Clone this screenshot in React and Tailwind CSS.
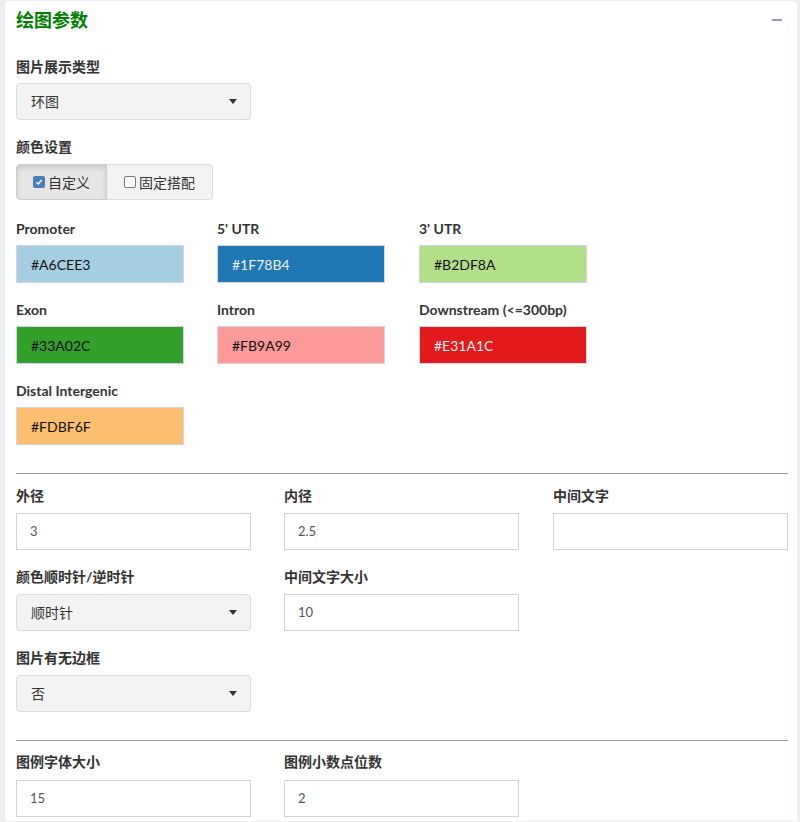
import React, { useState } from "react";

const colorItems = [
  { label: "Promoter", hex: "#A6CEE3", dark: false },
  { label: "5' UTR", hex: "#1F78B4", dark: true },
  { label: "3' UTR", hex: "#B2DF8A", dark: false },
  { label: "Exon", hex: "#33A02C", dark: false },
  { label: "Intron", hex: "#FB9A99", dark: false },
  { label: "Downstream (<=300bp)", hex: "#E31A1C", dark: true },
  { label: "Distal Intergenic", hex: "#FDBF6F", dark: false },
];

const Label = ({ children, className = "" }) => (
  <div className={`h-5 text-[14px] leading-5 font-bold text-[#333] ${className}`}>{children}</div>
);

const Select = ({ value }) => (
  <div className="h-[37px] w-[235px] flex items-center justify-between pl-[14px] pr-[13px] bg-[#f3f3f3] border border-[#dcdcdc] rounded text-[14px] text-[#333]">
    <span>{value}</span>
    <span className="w-0 h-0 border-l-[4px] border-r-[4px] border-t-[5px] border-l-transparent border-r-transparent border-t-[#333]"></span>
  </div>
);

const Input = ({ value }) => (
  <div className="h-[37px] w-[235px] flex items-center pl-[13px] bg-white border border-[#d2d2dc] text-[13px] text-[#555]">
    {value}
  </div>
);

const ColorBox = ({ hex, dark }) => (
  <div
    className={`h-[38px] w-[168px] flex items-center pl-[14px] border border-[#d2d6de] text-[14px] ${dark ? "text-[#f0f0f0]" : "text-[#111]"}`}
    style={{ backgroundColor: hex }}
  >
    {hex}
  </div>
);

const Field = ({ label, children, gap = "mb-[7px]" }) => (
  <div>
    <Label className={gap}>{label}</Label>
    {children}
  </div>
);

const CheckMark = ({ checked }) => (
  <span className={`w-[12px] h-[12px] rounded-[2px] flex items-center justify-center ${checked ? "bg-[#4a7ebb]" : "border border-[#777] bg-white"}`}>
    {checked && (
      <svg width="8" height="8" viewBox="0 0 8 8">
        <path d="M1.3 4.2 L3.2 6 L6.7 2" fill="none" stroke="white" strokeWidth="1.4" />
      </svg>
    )}
  </span>
);

export default function App() {
  const [mode, setMode] = useState("custom");

  return (
    <div
      className="min-h-screen bg-[#ecf0f5] pl-[5px] pr-[3px] pt-[1px]"
      style={{ fontFamily: 'Lato, "Noto Sans CJK SC", sans-serif' }}
    >
      <div className="bg-white rounded-t-[4px] pl-[11px] pr-[9px] pb-1">
        {/* header */}
        <div className="h-[38px] flex items-center justify-between">
          <h3 className="text-[18px] font-bold text-[#008000]">绘图参数</h3>
          <span className="block w-[10px] h-[2px] bg-[#97a0b3] mr-[6px]"></span>
        </div>

        <div className="pt-[18px]">
          <Label className="mb-[6px]">图片展示类型</Label>
          <Select value="环图" />
        </div>

        <div className="pt-[17px]">
          <Label className="mb-[7px]">颜色设置</Label>
          <div className="flex w-[197px] h-[36px] text-[14px] text-[#333]">
            <button
              onClick={() => setMode("custom")}
              className={`flex-1 flex items-center justify-center gap-[3px] border border-[#ccc] rounded-l ${mode === "custom" ? "bg-[#e6e6e6] shadow-[inset_0_3px_5px_rgba(0,0,0,0.125)]" : "bg-[#f3f3f3]"}`}
            >
              <CheckMark checked={mode === "custom"} />
              自定义
            </button>
            <button
              onClick={() => setMode("fixed")}
              className={`w-[106px] flex items-center justify-center gap-[3px] border border-l-0 border-[#ddd] rounded-r ${mode === "fixed" ? "bg-[#e6e6e6] shadow-[inset_0_3px_5px_rgba(0,0,0,0.125)]" : "bg-[#f3f3f3]"}`}
            >
              <CheckMark checked={mode === "fixed"} />
              固定搭配
            </button>
          </div>
        </div>

        {/* palette */}
        <div className="grid grid-cols-[201px_202px_168px] gap-y-[17px] pt-[19px]">
          {colorItems.map((c) => (
            <div key={c.label}>
              <Label className="mb-[6px]">{c.label}</Label>
              <ColorBox hex={c.hex} dark={c.dark} />
            </div>
          ))}
        </div>

        <hr className="mt-[28px] border-t border-[#999]" />

        <div className="grid grid-cols-[268px_269px_235px] gap-y-[17px] pt-[12px]">
          <Field label="外径"><Input value="3" /></Field>
          <Field label="内径"><Input value="2.5" /></Field>
          <Field label="中间文字"><Input value="" /></Field>
          <Field label="颜色顺时针/逆时针"><Select value="顺时针" /></Field>
          <Field label="中间文字大小"><Input value="10" /></Field>
          <div></div>
          <Field label="图片有无边框"><Select value="否" /></Field>
        </div>

        <hr className="mt-[28px] border-t border-[#999]" />

        <div className="grid grid-cols-[268px_269px_235px] pt-[11px]">
          <Field label="图例字体大小" gap="mb-[8px]"><Input value="15" /></Field>
          <Field label="图例小数点位数" gap="mb-[8px]"><Input value="2" /></Field>
        </div>
      </div>
    </div>
  );
}
